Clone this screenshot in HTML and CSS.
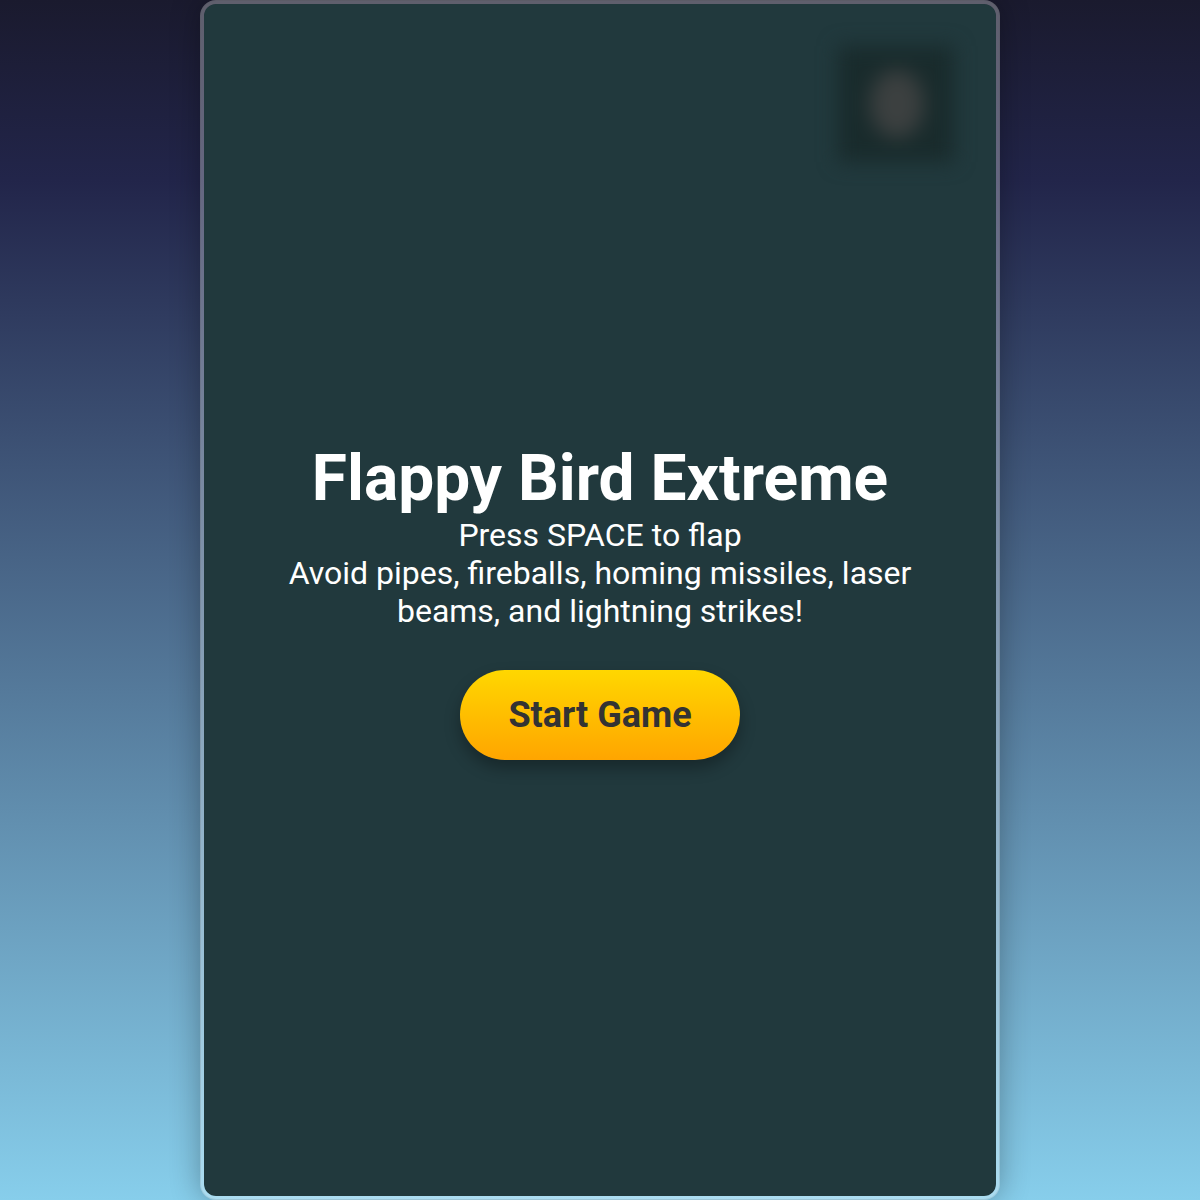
FILE: index.html
```html
<!DOCTYPE html>
<html lang="en">
<head>
  <meta charset="UTF-8">
  <title>Flappy Bird Extreme</title>
  <link rel="stylesheet" href="styles.css">
</head>
<body>
  <div class="game-container">
    <div class="bird"></div>
    <div class="overlay">
      <h1 class="title">Flappy Bird Extreme</h1>
      <p class="subtitle">Press SPACE to flap<br>Avoid pipes, fireballs, homing missiles, laser beams, and lightning strikes!</p>
      <button class="start-btn">Start Game</button>
    </div>
  </div>
</body>
</html>
```
FILE: styles.css
```css
body {
  margin: 0;
  height: 1200px;
  font-family: Roboto, "Liberation Sans", sans-serif;
  background: linear-gradient(to bottom, #1a1a2e, #22254a 15%, #87ceeb);
  display: flex;
  justify-content: center;
  overflow: hidden;
}
.game-container {
  position: relative;
  width: 800px;
  height: 1200px;
  box-sizing: border-box;
  border: 4px solid rgba(255, 255, 255, 0.3);
  border-radius: 16px;
  overflow: hidden;
  background: #21393d;
  background-clip: padding-box;
  box-shadow: 0 0 30px rgba(0, 0, 0, 0.3);
}
.bird {
  position: absolute;
  top: 42px;
  right: 42px;
  width: 116px;
  height: 116px;
  background: #192b2c;
  filter: blur(10px);
}
.bird::after {
  content: "";
  position: absolute;
  left: 32px;
  top: 24px;
  width: 54px;
  height: 68px;
  border-radius: 50%;
  background: #3c4040;
}
.overlay {
  height: 100%;
  display: flex;
  flex-direction: column;
  align-items: center;
  justify-content: center;
  text-align: center;
  color: #fff;
}
.title {
  margin: 0;
  font-size: 64px;
  font-weight: 700;
}
.subtitle {
  margin: 0 0 40px;
  max-width: 660px;
  font-size: 32px;
  line-height: 38px;
}
.start-btn {
  width: 280px;
  height: 90px;
  border: none;
  border-radius: 45px;
  background: linear-gradient(to bottom, #ffd700, #ffa500);
  color: #333;
  font-family: inherit;
  font-size: 36px;
  font-weight: 700;
  box-shadow: 0 8px 16px rgba(0, 0, 0, 0.3);
  cursor: pointer;
}
```
